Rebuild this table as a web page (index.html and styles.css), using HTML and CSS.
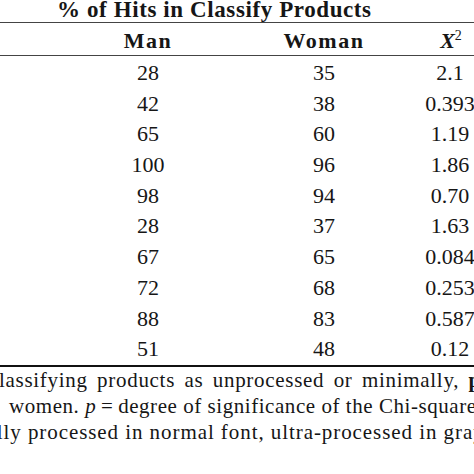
FILE: index.html
```html
<!DOCTYPE html>
<html>
<head>
<meta charset="utf-8">
<link rel="stylesheet" href="styles.css">
</head>
<body>
<div class="page">
  <div class="title-row"><span class="title">% of Hits in Classify Products</span></div>
  <div class="grid head">
    <div class="c-man">Man</div>
    <div class="c-woman">Woman</div>
    <div class="c-x2"><i>X</i><sup>2</sup></div>
  </div>
  <div class="grid body">
    <div class="c-man">28</div><div class="c-woman">35</div><div class="c-x2">2.1</div>
    <div class="c-man">42</div><div class="c-woman">38</div><div class="c-x2">0.393</div>
    <div class="c-man">65</div><div class="c-woman">60</div><div class="c-x2">1.19</div>
    <div class="c-man">100</div><div class="c-woman">96</div><div class="c-x2">1.86</div>
    <div class="c-man">98</div><div class="c-woman">94</div><div class="c-x2">0.70</div>
    <div class="c-man">28</div><div class="c-woman">37</div><div class="c-x2">1.63</div>
    <div class="c-man">67</div><div class="c-woman">65</div><div class="c-x2">0.084</div>
    <div class="c-man">72</div><div class="c-woman">68</div><div class="c-x2">0.253</div>
    <div class="c-man">88</div><div class="c-woman">83</div><div class="c-x2">0.587</div>
    <div class="c-man">51</div><div class="c-woman">48</div><div class="c-x2">0.12</div>
  </div>
  <div class="caption">
    <div class="cap-line l1">classifying products as unprocessed or minimally, <b>p</b></div>
    <div class="cap-line l2">women. <i>p</i>&#8201;=&#8201;degree of significance of the Chi-square test</div>
    <div class="cap-line l3">minimally processed in normal font, ultra-processed in gray</div>
  </div>
</div>
</body>
</html>
```
FILE: styles.css
```css
html, body {
  margin: 0;
  padding: 0;
  background: #ffffff;
}
body {
  width: 474px;
  height: 474px;
  overflow: hidden;
  font-family: "Liberation Serif", "Times New Roman", serif;
  color: #161616;
}
.page {
  width: 474px;
  overflow: hidden;
}
.title-row {
  height: 23px;
  border-bottom: 1px solid #444;
  padding-left: 57px;
  white-space: nowrap;
}
.title {
  display: block;
  font-weight: bold;
  font-size: 23px;
  line-height: 22px;
  letter-spacing: 0.6px;
  margin-top: -1px;
}
.grid {
  display: grid;
  grid-template-columns: 98px 100px 76px 100px 26px 100px;
  width: 474px;
  overflow: hidden;
  font-size: 22px;
}
.grid > div {
  text-align: center;
  white-space: nowrap;
}
.c-man { grid-column: 2; }
.c-woman { grid-column: 4; }
.c-x2 { grid-column: 6; }
.head {
  height: 28px;
  padding-top: 4px;
  border-bottom: 1px solid #444;
  font-weight: bold;
  line-height: 28px;
  letter-spacing: 1.5px;
}
.head .c-x2 {
  letter-spacing: 0;
  padding-left: 2px;
}
.head sup {
  font-size: 14px;
  line-height: 0;
  vertical-align: 8px;
  font-weight: normal;
}
.body {
  grid-auto-rows: 30.7px;
  line-height: 30.7px;
  padding-top: 2px;
  padding-bottom: 0;
  border-bottom: 2px solid #111;
}
.caption {
  font-size: 21px;
  line-height: 26px;
  letter-spacing: 0.7px;
  white-space: nowrap;
}
.l1 {
  width: 492px;
  margin-left: -11px;
  text-align: justify;
  text-align-last: justify;
}
.l2 {
  padding-left: 9px;
  letter-spacing: 0.55px;
}
.l3 {
  margin-left: -73px;
  letter-spacing: 0.93px;
}
```
